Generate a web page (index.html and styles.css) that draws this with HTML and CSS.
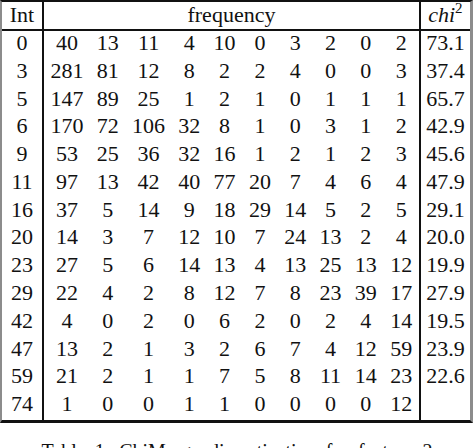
FILE: index.html
```html
<!DOCTYPE html>
<html>
<head>
<meta charset="utf-8">
<link rel="stylesheet" href="styles.css">
</head>
<body>
<table class="tbl">
  <colgroup>
    <col class="w-int"><col class="w3"><col class="w2"><col class="w3"><col class="w2"><col class="w2"><col class="w2"><col class="w2"><col class="w2"><col class="w2"><col class="w2"><col class="w-chi">
  </colgroup>
  <tr class="hd"><td class="int">Int</td><td colspan="10">frequency</td><td class="chi"><i>chi</i><sup>2</sup></td></tr>
  <tr><td class="int">0</td><td>40</td><td>13</td><td>11</td><td>4</td><td>10</td><td>0</td><td>3</td><td>2</td><td>0</td><td>2</td><td class="chi">73.1</td></tr>
  <tr><td class="int">3</td><td>281</td><td>81</td><td>12</td><td>8</td><td>2</td><td>2</td><td>4</td><td>0</td><td>0</td><td>3</td><td class="chi">37.4</td></tr>
  <tr><td class="int">5</td><td>147</td><td>89</td><td>25</td><td>1</td><td>2</td><td>1</td><td>0</td><td>1</td><td>1</td><td>1</td><td class="chi">65.7</td></tr>
  <tr><td class="int">6</td><td>170</td><td>72</td><td>106</td><td>32</td><td>8</td><td>1</td><td>0</td><td>3</td><td>1</td><td>2</td><td class="chi">42.9</td></tr>
  <tr><td class="int">9</td><td>53</td><td>25</td><td>36</td><td>32</td><td>16</td><td>1</td><td>2</td><td>1</td><td>2</td><td>3</td><td class="chi">45.6</td></tr>
  <tr><td class="int">11</td><td>97</td><td>13</td><td>42</td><td>40</td><td>77</td><td>20</td><td>7</td><td>4</td><td>6</td><td>4</td><td class="chi">47.9</td></tr>
  <tr><td class="int">16</td><td>37</td><td>5</td><td>14</td><td>9</td><td>18</td><td>29</td><td>14</td><td>5</td><td>2</td><td>5</td><td class="chi">29.1</td></tr>
  <tr><td class="int">20</td><td>14</td><td>3</td><td>7</td><td>12</td><td>10</td><td>7</td><td>24</td><td>13</td><td>2</td><td>4</td><td class="chi">20.0</td></tr>
  <tr><td class="int">23</td><td>27</td><td>5</td><td>6</td><td>14</td><td>13</td><td>4</td><td>13</td><td>25</td><td>13</td><td>12</td><td class="chi">19.9</td></tr>
  <tr><td class="int">29</td><td>22</td><td>4</td><td>2</td><td>8</td><td>12</td><td>7</td><td>8</td><td>23</td><td>39</td><td>17</td><td class="chi">27.9</td></tr>
  <tr><td class="int">42</td><td>4</td><td>0</td><td>2</td><td>0</td><td>6</td><td>2</td><td>0</td><td>2</td><td>4</td><td>14</td><td class="chi">19.5</td></tr>
  <tr><td class="int">47</td><td>13</td><td>2</td><td>1</td><td>3</td><td>2</td><td>6</td><td>7</td><td>4</td><td>12</td><td>59</td><td class="chi">23.9</td></tr>
  <tr><td class="int">59</td><td>21</td><td>2</td><td>1</td><td>1</td><td>7</td><td>5</td><td>8</td><td>11</td><td>14</td><td>23</td><td class="chi">22.6</td></tr>
  <tr><td class="int">74</td><td>1</td><td>0</td><td>0</td><td>1</td><td>1</td><td>0</td><td>0</td><td>0</td><td>0</td><td>12</td><td class="chi"></td></tr>
</table>
<p class="caption">Table 1: ChiMerge discretization for feature 2</p>
</body>
</html>
```

FILE: styles.css
```css
* {
  font-family: "Liberation Serif", Tinos, "Times New Roman", serif;
}

html, body {
  margin: 0;
  padding: 0;
  background: #ffffff;
}

body {
  color: #111111;
}

.tbl {
  table-layout: fixed;
  border-collapse: separate;
  border-spacing: 0;
  width: 472.8px;
  border-top: 2px solid #111111;
  border-bottom: 3px solid #111111;
  border-left: 2px solid #8c8c8c;
  border-right: 3px solid #8c8c8c;
}

.w-int { width: 42px; }
.w3 { width: 46.2px; }
.w2 { width: 35.3px; }
.w-chi { width: 51px; }

.tbl td {
  box-sizing: border-box;
  padding: 0 0 4.79px 0;
  font-size: 22px;
  line-height: 23px;
  height: 27.79px;
  text-align: center;
  vertical-align: top;
  white-space: nowrap;
}

.tbl td.int {
  border-right: 2px solid #111111;
}

.tbl td.chi {
  border-left: 2px solid #111111;
}

.tbl .hd td {
  height: 29px;
  padding-top: 1px;
  padding-bottom: 3px;
  border-bottom: 2px solid #111111;
}

.chi i {
  font-style: italic;
}

.chi sup {
  font-size: 15px;
  line-height: 0;
  vertical-align: 9px;
}

.caption {
  margin: 16px 0 0 0;
  width: 474px;
  text-align: center;
  font-size: 20px;
  line-height: 24px;
  word-spacing: 4px;
}
```
